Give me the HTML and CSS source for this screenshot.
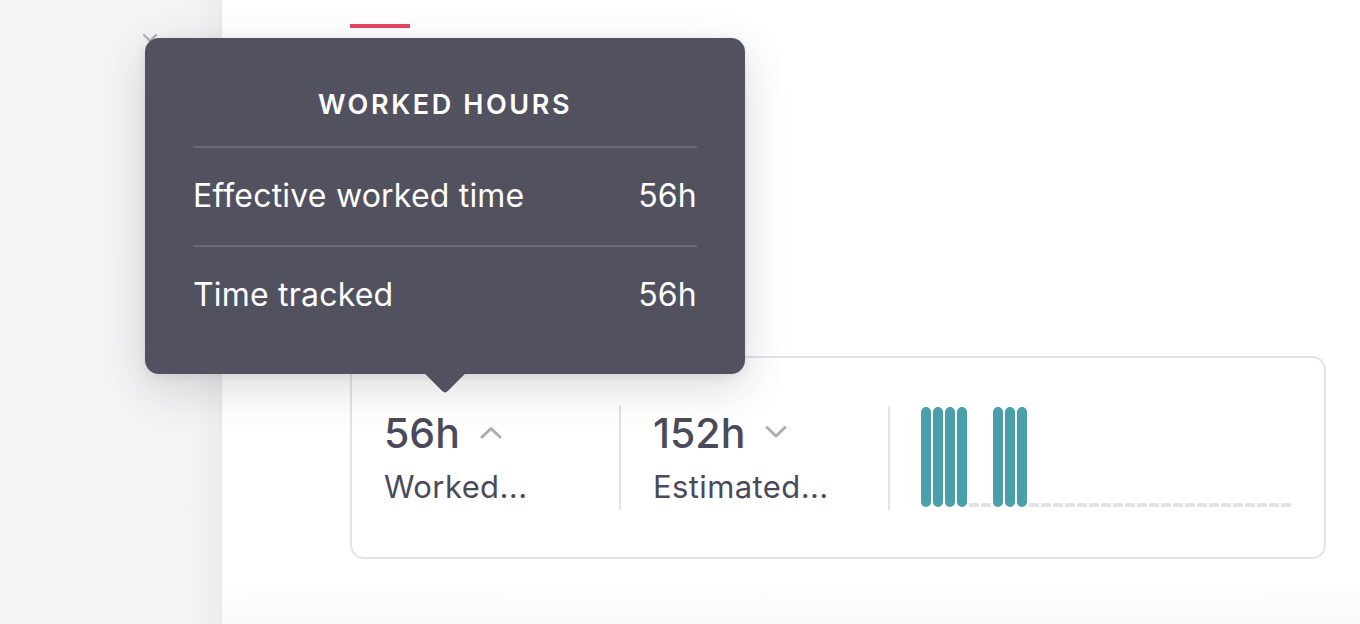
FILE: index.html
```html
<!DOCTYPE html>
<html lang="en">
<head>
<meta charset="utf-8">
<title>Worked hours</title>
<link rel="stylesheet" href="styles.css">
</head>
<body>
<div class="app">
  <aside class="sidebar">
    <svg class="side-chevron" width="16" height="10" viewBox="0 0 16 10"><polyline points="2,2 8,8 14,2" fill="none" stroke="#b3b1bb" stroke-width="2.4" stroke-linecap="round" stroke-linejoin="round"/></svg>
  </aside>
  <main class="main">
    <div class="tabs"><span class="tab-active"></span></div>
    <section class="card">
      <div class="stat">
        <div class="stat-value">56h
          <svg class="stat-chevron" width="24" height="14" viewBox="0 0 24 14"><polyline points="3,12 12,3.5 21,12" fill="none" stroke="#adabb5" stroke-width="3" stroke-linecap="round" stroke-linejoin="round"/></svg>
        </div>
        <div class="stat-label">Worked...</div>
      </div>
      <div class="divider"></div>
      <div class="stat">
        <div class="stat-value">152h
          <svg class="stat-chevron" width="24" height="14" viewBox="0 0 24 14"><polyline points="3,2.5 12,11 21,2.5" fill="none" stroke="#adabb5" stroke-width="3" stroke-linecap="round" stroke-linejoin="round"/></svg>
        </div>
        <div class="stat-label">Estimated...</div>
      </div>
      <div class="divider"></div>
      <div class="chart">
        <span class="bar"></span><span class="bar"></span><span class="bar"></span><span class="bar"></span>
        <span class="dash"></span><span class="dash"></span>
        <span class="bar"></span><span class="bar"></span><span class="bar"></span>
        <span class="dash"></span><span class="dash"></span><span class="dash"></span><span class="dash"></span><span class="dash"></span><span class="dash"></span><span class="dash"></span><span class="dash"></span><span class="dash"></span><span class="dash"></span><span class="dash"></span>
        <span class="dash"></span><span class="dash"></span><span class="dash"></span><span class="dash"></span><span class="dash"></span><span class="dash"></span><span class="dash"></span><span class="dash"></span><span class="dash"></span><span class="dash"></span><span class="dash"></span>
      </div>
    </section>
  </main>
  <div class="tooltip">
    <div class="tooltip-title">WORKED HOURS</div>
    <div class="tooltip-row"><span>Effective worked time</span><span>56h</span></div>
    <div class="tooltip-row"><span>Time tracked</span><span>56h</span></div>
    <span class="tooltip-arrow"></span>
  </div>
</div>
</body>
</html>
```

FILE: styles.css
```css
* { box-sizing: border-box; }
html, body { margin: 0; padding: 0; }
body {
  font-family: Inter, "Noto Sans", "Liberation Sans", sans-serif;
  background: #ffffff;
  color: #4b4a5a;
  width: 1360px;
  height: 624px;
  overflow: hidden;
}
.app {
  position: relative;
  display: flex;
  height: 624px;
}
.sidebar {
  width: 222px;
  flex: none;
  background: linear-gradient(90deg, #f5f5f6 0%, #f3f3f4 88%, #ececee 100%);
  border-right: 1px solid #e6e6e8;
  position: relative;
}
.side-chevron {
  position: absolute;
  left: 142px;
  top: 33px;
}
.main {
  flex: 1;
  padding-left: 128px;
  background: linear-gradient(180deg, #ffffff 0%, #ffffff 93%, #f9f9f9 100%);
  display: flex;
  flex-direction: column;
}
.tabs {
  height: 356px;
  padding-top: 24px;
}
.tab-active {
  display: block;
  width: 60px;
  height: 4px;
  background: #e5475f;
}
.card {
  width: 976px;
  height: 203px;
  border: 2px solid #e3e3e6;
  border-radius: 14px;
  padding-top: 48px;
  display: flex;
  align-items: flex-start;
}
.stat {
  width: 267px;
  padding: 0 31px 0 32px;
  height: 104px;
}
.stat-value {
  display: flex;
  align-items: center;
  font-size: 41px;
  font-weight: 500;
  line-height: 54px;
  height: 54px;
  color: #4b4a5a;
}
.stat-chevron {
  margin-left: 19px;
  margin-top: -2px;
}
.stat-label {
  margin-top: 9px;
  font-size: 31px;
  letter-spacing: 0.4px;
  line-height: 36px;
  font-weight: 400;
  color: #4b4a5a;
  white-space: nowrap;
}
.divider {
  width: 2px;
  height: 104px;
  background: #e3e3e6;
  flex: none;
}
.chart {
  display: flex;
  align-items: flex-end;
  gap: 2px;
  height: 101px;
  padding-left: 31px;
}
.bar {
  width: 10px;
  height: 100px;
  border-radius: 5px;
  background: #4aa0aa;
}
.dash {
  width: 10px;
  height: 4px;
  border-radius: 1px;
  background: #e2e2e5;
}
.tooltip {
  position: absolute;
  left: 145px;
  top: 38px;
  width: 600px;
  height: 336px;
  background: #52515f;
  border-radius: 14px;
  padding: 0 48px;
  color: #ffffff;
  box-shadow: 0 14px 44px rgba(30, 30, 45, 0.16), 0 2px 8px rgba(30, 30, 45, 0.08);
}
.tooltip-title {
  height: 110px;
  padding-top: 52px;
  text-align: center;
  font-size: 27px;
  font-weight: 600;
  letter-spacing: 2.6px;
  line-height: 30px;
  border-bottom: 2px solid #6b6a78;
}
.tooltip-row {
  display: flex;
  justify-content: space-between;
  align-items: center;
  height: 97px;
  font-size: 32px;
  font-weight: 400;
  letter-spacing: 0.2px;
  padding-bottom: 2px;
}
.tooltip-row + .tooltip-row { border-top: 2px solid #6b6a78; height: 98px; }
.tooltip-arrow {
  position: absolute;
  left: 286px;
  top: 322px;
  width: 28px;
  height: 28px;
  background: #52515f;
  transform: rotate(45deg);
  border-bottom-right-radius: 4px;
}
```
